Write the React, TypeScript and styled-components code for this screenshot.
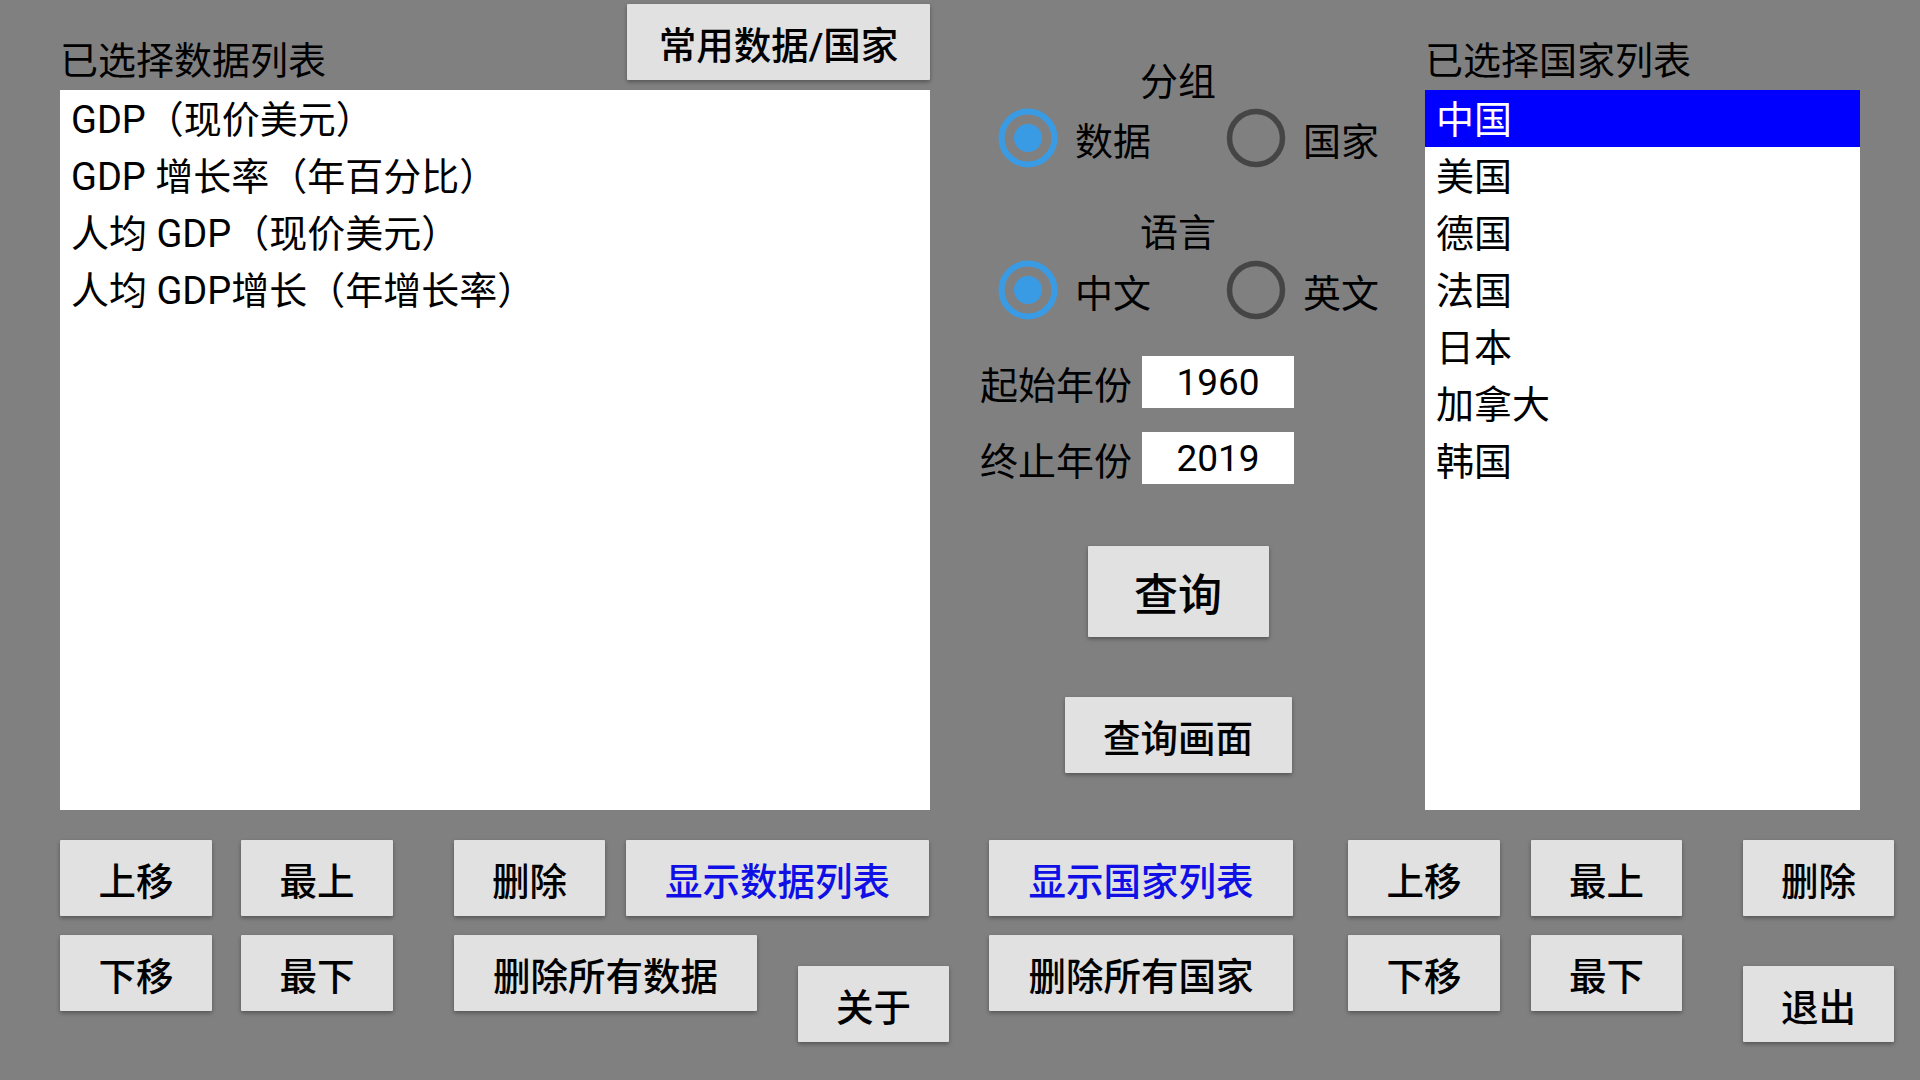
import * as React from "react"
import styled, { createGlobalStyle } from "styled-components"

const dataItems = [
  "GDP（现价美元）",
  "GDP 增长率（年百分比）",
  "人均 GDP（现价美元）",
  "人均 GDP增长（年增长率）"
]

const countries = ["中国", "美国", "德国", "法国", "日本", "加拿大", "韩国"]

const Radio = ({ checked }: { checked: boolean }) => (
  <svg width="60" height="60" viewBox="0 0 60 60">
    <circle
      cx="30"
      cy="30"
      r="26.5"
      fill="none"
      stroke={checked ? "#3a9be5" : "#454545"}
      strokeWidth={checked ? 6 : 5.5}
    />
    {checked && <circle cx="30" cy="30" r="14" fill="#3a9be5" />}
  </svg>
)

export default () => (
  <Screen>
    <GlobalStyle />
    <TopArea>
      <ListPanel $width={870}>
        <PanelHeader>
          <PanelTitle>已选择数据列表</PanelTitle>
          <Button $w={303} $h={76} style={{ marginBottom: 10 }}>
            常用数据/国家
          </Button>
        </PanelHeader>
        <ListBox>
          {dataItems.map(item => (
            <ListRow key={item}>{item}</ListRow>
          ))}
        </ListBox>
      </ListPanel>

      <CenterPanel>
        <GroupTitle $top={60}>分组</GroupTitle>
        <RadioRow $top={4}>
          <RadioOption $w={228}>
            <Radio checked />
            数据
          </RadioOption>
          <RadioOption>
            <Radio checked={false} />
            国家
          </RadioOption>
        </RadioRow>
        <GroupTitle $top={43}>语言</GroupTitle>
        <RadioRow $top={5}>
          <RadioOption $w={228}>
            <Radio checked />
            中文
          </RadioOption>
          <RadioOption>
            <Radio checked={false} />
            英文
          </RadioOption>
        </RadioRow>
        <YearRow $top={36}>
          <YearLabel>起始年份</YearLabel>
          <YearInput>1960</YearInput>
        </YearRow>
        <YearRow $top={24}>
          <YearLabel>终止年份</YearLabel>
          <YearInput>2019</YearInput>
        </YearRow>
        <Button $w={181} $h={91} $size={44} $top={62} $center>
          查询
        </Button>
        <Button $w={227} $h={76} $top={60} $center>
          查询画面
        </Button>
      </CenterPanel>

      <ListPanel $width={435} style={{ marginLeft: 49 }}>
        <PanelHeader>
          <PanelTitle>已选择国家列表</PanelTitle>
        </PanelHeader>
        <ListBox>
          {countries.map((c, i) => (
            <ListRow key={c} $selected={i === 0}>
              {c}
            </ListRow>
          ))}
        </ListBox>
      </ListPanel>
    </TopArea>

    <BottomArea>
      <Stack>
        <Button $w={152} $h={76}>上移</Button>
        <Button $w={152} $h={76}>下移</Button>
      </Stack>
      <Stack $left={29}>
        <Button $w={152} $h={76}>最上</Button>
        <Button $w={152} $h={76}>最下</Button>
      </Stack>
      <Stack $left={61}>
        <ButtonRow $gap={21}>
          <Button $w={151} $h={76}>删除</Button>
          <Button $w={303} $h={76} $blue>显示数据列表</Button>
        </ButtonRow>
        <ButtonRow $gap={41}>
          <Button $w={303} $h={76}>删除所有数据</Button>
          <Button $w={151} $h={76} $top={31}>关于</Button>
        </ButtonRow>
      </Stack>
      <Stack $left={40}>
        <Button $w={304} $h={76} $blue>显示国家列表</Button>
        <Button $w={304} $h={76}>删除所有国家</Button>
      </Stack>
      <Stack $left={55}>
        <Button $w={152} $h={76}>上移</Button>
        <Button $w={152} $h={76}>下移</Button>
      </Stack>
      <Stack $left={31}>
        <Button $w={151} $h={76}>最上</Button>
        <Button $w={151} $h={76}>最下</Button>
      </Stack>
      <Stack $left={61}>
        <Button $w={151} $h={76}>删除</Button>
        <Button $w={151} $h={76} $top={31}>退出</Button>
      </Stack>
    </BottomArea>
  </Screen>
)

const GlobalStyle = createGlobalStyle`
  html, body {
    margin: 0;
    padding: 0;
    background: #808080;
  }
  body {
    font-family: Roboto, "Noto Sans CJK SC", sans-serif;
  }
`

const Screen = styled.div`
  width: 1920px;
  height: 1080px;
  box-sizing: border-box;
  padding-left: 60px;
  display: flex;
  flex-direction: column;
  background: #808080;
  color: #000;
  font-size: 38px;
  overflow: hidden;
`

const TopArea = styled.div`
  display: flex;
  height: 810px;
`

const ListPanel = styled.div<{ $width: number }>`
  width: ${p => p.$width}px;
  display: flex;
  flex-direction: column;
`

const PanelHeader = styled.div`
  height: 90px;
  display: flex;
  align-items: flex-end;
  justify-content: space-between;
`

const PanelTitle = styled.div`
  line-height: 44px;
  padding-bottom: 7px;
`

const ListBox = styled.div`
  flex: 1;
  background: #fff;
  display: flex;
  flex-direction: column;
`

const ListRow = styled.div<{ $selected?: boolean }>`
  height: 57px;
  line-height: 60px;
  padding-left: 11px;
  white-space: pre;
  background: ${p => (p.$selected ? "#0000ff" : "transparent")};
  color: ${p => (p.$selected ? "#fff" : "#000")};
`

const CenterPanel = styled.div`
  width: 396px;
  margin-left: 50px;
  display: flex;
  flex-direction: column;
`

const GroupTitle = styled.div<{ $top: number }>`
  align-self: center;
  margin-top: ${p => p.$top}px;
  line-height: 44px;
`

const RadioRow = styled.div<{ $top: number }>`
  display: flex;
  height: 60px;
  margin-top: ${p => p.$top}px;
  margin-left: 18px;
`

const RadioOption = styled.div<{ $w?: number }>`
  display: flex;
  align-items: center;
  gap: 17px;
  width: ${p => (p.$w ? `${p.$w}px` : "auto")};
  flex-shrink: 0;
  white-space: nowrap;
`

const YearRow = styled.div<{ $top: number }>`
  display: flex;
  align-items: center;
  gap: 12px;
  height: 52px;
  margin-top: ${p => p.$top}px;
`

const YearLabel = styled.div`
  width: 150px;
  white-space: nowrap;
`

const YearInput = styled.div`
  width: 152px;
  height: 52px;
  background: #fff;
  display: flex;
  align-items: center;
  justify-content: center;
  font-size: 37px;
`

const BottomArea = styled.div`
  display: flex;
  align-items: flex-start;
  margin-top: 30px;
`

const Stack = styled.div<{ $left?: number }>`
  display: flex;
  flex-direction: column;
  align-items: flex-start;
  gap: 19px;
  margin-left: ${p => p.$left || 0}px;
`

const ButtonRow = styled.div<{ $gap: number }>`
  display: flex;
  align-items: flex-start;
  gap: ${p => p.$gap}px;
`

const Button = styled.button<{
  $w: number
  $h: number
  $size?: number
  $top?: number
  $blue?: boolean
  $center?: boolean
}>`
  width: ${p => p.$w}px;
  height: ${p => p.$h}px;
  margin-top: ${p => p.$top || 0}px;
  align-self: ${p => (p.$center ? "center" : "auto")};
  flex-shrink: 0;
  padding: 0;
  border: none;
  border-radius: 1px;
  background: #e1e1e1;
  box-shadow: 0 2px 4px rgba(0, 0, 0, 0.35);
  font-family: Roboto, "Noto Sans CJK SC", sans-serif;
  font-size: ${p => p.$size || 37.5}px;
  font-weight: 500;
  color: ${p => (p.$blue ? "#1010e6" : "#000")};
  white-space: nowrap;
`
